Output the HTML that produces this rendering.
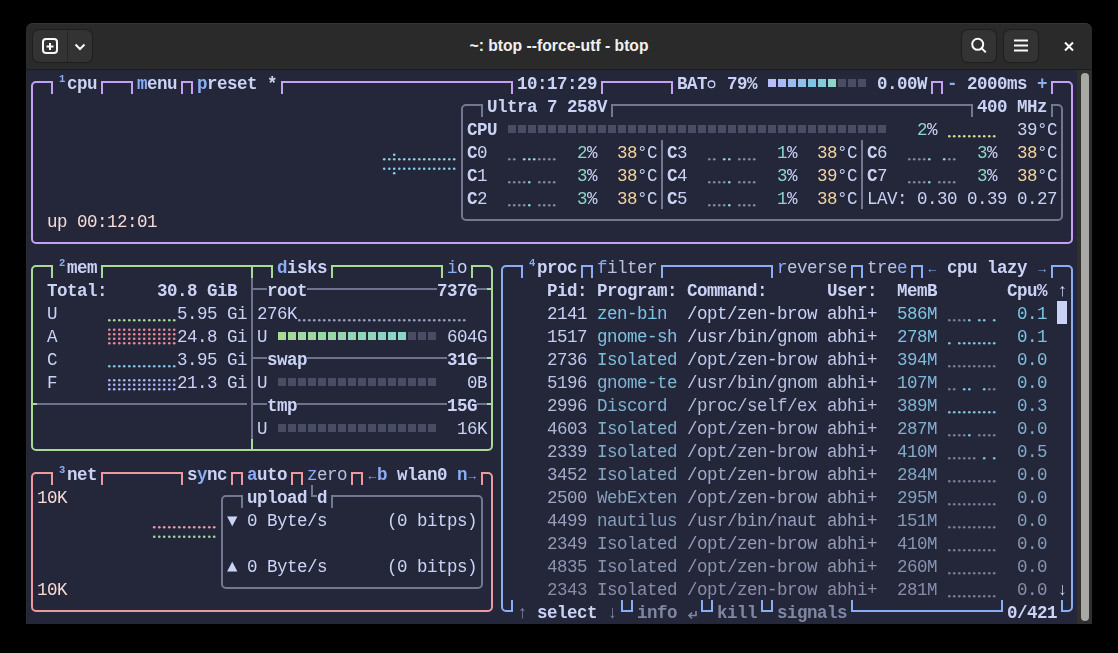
<!DOCTYPE html>
<html><head><meta charset="utf-8"><style>
html,body{margin:0;padding:0;width:1118px;height:653px;overflow:hidden;background:#000}
#win{position:absolute;left:26px;top:23px;width:1066px;height:601px;background:#2a2a2a;border-radius:7px 7px 0 0;overflow:hidden;box-shadow:inset 0 1px 0 #353535}
#hdr{position:absolute;left:0;top:0;width:1066px;height:46px;background:transparent;border-bottom:1px solid #1c1c1c}
#term{position:absolute;left:1px;top:47px;width:1050px;height:554px;background:#24273a}
#sb{position:absolute;left:1051px;top:47px;width:15px;height:554px;background:#303030}
#thumb{position:absolute;left:4px;top:3px;width:8px;height:548px;background:#a8a8a4;border-radius:4px}
.t{position:absolute;white-space:pre;font-family:"Liberation Mono",monospace;font-size:17.5px;letter-spacing:-0.5px;line-height:23px;height:23px}
.b{font-weight:bold}
.sup{font-size:10.5px;letter-spacing:0;font-weight:bold}
.arr{font-size:12.5px;letter-spacing:0}
.title{position:absolute;left:0;width:1066px;top:0;height:46px;line-height:46px;text-align:center;font-family:"Liberation Sans",sans-serif;font-weight:bold;font-size:15.7px;color:#f0f0f0}
.btn{position:absolute;background:#333333;border-radius:6px;box-shadow:0 0 0 1px rgba(0,0,0,0.28)}
svg{position:absolute;left:0;top:0}
</style></head><body>
<div id="win">
<div id="hdr">
 <div class="btn" style="left:7px;top:7px;width:59px;height:32px"></div>
 <div style="position:absolute;left:41px;top:7px;width:1px;height:32px;background:#262626"></div>
 <div class="btn" style="left:936px;top:7px;width:34px;height:32px"></div>
 <div class="btn" style="left:978px;top:7px;width:34px;height:32px"></div>
 <div class="title">~: btop --force-utf - btop</div>
 <svg width="1066" height="46" viewBox="0 0 1066 46">
  <rect x="17" y="16" width="14" height="14" rx="3" fill="none" stroke="#fafafa" stroke-width="2"/>
  <path d="M24 20V27M20.5 23.5H27.5" stroke="#fafafa" stroke-width="2"/>
  <path d="M49.5 21.5L54 26L58.5 21.5" fill="none" stroke="#fafafa" stroke-width="2"/>
  <circle cx="951.7" cy="21.3" r="5.5" fill="none" stroke="#fafafa" stroke-width="2"/>
  <path d="M955.8 25.4L959.8 29.4" stroke="#fafafa" stroke-width="2"/>
  <path d="M988 17.5H1002M988 22.5H1002M988 27.5H1002" stroke="#fafafa" stroke-width="2"/>
  <path d="M1039 19.5L1047 27.5M1047 19.5L1039 27.5" stroke="#fafafa" stroke-width="2"/>
 </svg>
</div>
<div id="term"></div>
<div id="sb"><div id="thumb"></div></div>
</div>

<svg width="1118" height="653" viewBox="0 0 1118 653" style="position:absolute;left:0;top:0">
<rect x="768" y="79" width="8" height="8" fill="#b7bdf8"/>
<rect x="778" y="79" width="8" height="8" fill="#a9bbf6"/>
<rect x="788" y="79" width="8" height="8" fill="#9bbcf2"/>
<rect x="798" y="79" width="8" height="8" fill="#8dc0ec"/>
<rect x="808" y="79" width="8" height="8" fill="#80c4e4"/>
<rect x="818" y="79" width="8" height="8" fill="#82cbd9"/>
<rect x="828" y="79" width="8" height="8" fill="#8bd5ca"/>
<rect x="838" y="79" width="8" height="8" fill="#494d64"/>
<rect x="848" y="79" width="8" height="8" fill="#494d64"/>
<rect x="858" y="79" width="8" height="8" fill="#494d64"/>
<rect x="508" y="125" width="8" height="8" fill="#494d64"/>
<rect x="518" y="125" width="8" height="8" fill="#494d64"/>
<rect x="528" y="125" width="8" height="8" fill="#494d64"/>
<rect x="538" y="125" width="8" height="8" fill="#494d64"/>
<rect x="548" y="125" width="8" height="8" fill="#494d64"/>
<rect x="558" y="125" width="8" height="8" fill="#494d64"/>
<rect x="568" y="125" width="8" height="8" fill="#494d64"/>
<rect x="578" y="125" width="8" height="8" fill="#494d64"/>
<rect x="588" y="125" width="8" height="8" fill="#494d64"/>
<rect x="598" y="125" width="8" height="8" fill="#494d64"/>
<rect x="608" y="125" width="8" height="8" fill="#494d64"/>
<rect x="618" y="125" width="8" height="8" fill="#494d64"/>
<rect x="628" y="125" width="8" height="8" fill="#494d64"/>
<rect x="638" y="125" width="8" height="8" fill="#494d64"/>
<rect x="648" y="125" width="8" height="8" fill="#494d64"/>
<rect x="658" y="125" width="8" height="8" fill="#494d64"/>
<rect x="668" y="125" width="8" height="8" fill="#494d64"/>
<rect x="678" y="125" width="8" height="8" fill="#494d64"/>
<rect x="688" y="125" width="8" height="8" fill="#494d64"/>
<rect x="698" y="125" width="8" height="8" fill="#494d64"/>
<rect x="708" y="125" width="8" height="8" fill="#494d64"/>
<rect x="718" y="125" width="8" height="8" fill="#494d64"/>
<rect x="728" y="125" width="8" height="8" fill="#494d64"/>
<rect x="738" y="125" width="8" height="8" fill="#494d64"/>
<rect x="748" y="125" width="8" height="8" fill="#494d64"/>
<rect x="758" y="125" width="8" height="8" fill="#494d64"/>
<rect x="768" y="125" width="8" height="8" fill="#494d64"/>
<rect x="778" y="125" width="8" height="8" fill="#494d64"/>
<rect x="788" y="125" width="8" height="8" fill="#494d64"/>
<rect x="798" y="125" width="8" height="8" fill="#494d64"/>
<rect x="808" y="125" width="8" height="8" fill="#494d64"/>
<rect x="818" y="125" width="8" height="8" fill="#494d64"/>
<rect x="828" y="125" width="8" height="8" fill="#494d64"/>
<rect x="838" y="125" width="8" height="8" fill="#494d64"/>
<rect x="848" y="125" width="8" height="8" fill="#494d64"/>
<rect x="858" y="125" width="8" height="8" fill="#494d64"/>
<rect x="868" y="125" width="8" height="8" fill="#494d64"/>
<rect x="878" y="125" width="8" height="8" fill="#494d64"/>
<rect x="278" y="332" width="8" height="8" fill="#a6da95"/>
<rect x="288" y="332" width="8" height="8" fill="#a3d999"/>
<rect x="298" y="332" width="8" height="8" fill="#a0d89d"/>
<rect x="308" y="332" width="8" height="8" fill="#9dd8a1"/>
<rect x="318" y="332" width="8" height="8" fill="#9ad7a6"/>
<rect x="328" y="332" width="8" height="8" fill="#97d7aa"/>
<rect x="338" y="332" width="8" height="8" fill="#94d6ae"/>
<rect x="348" y="332" width="8" height="8" fill="#91d6b2"/>
<rect x="358" y="332" width="8" height="8" fill="#8fd6b7"/>
<rect x="368" y="332" width="8" height="8" fill="#8dd5bb"/>
<rect x="378" y="332" width="8" height="8" fill="#8bd5c0"/>
<rect x="388" y="332" width="8" height="8" fill="#8bd5c5"/>
<rect x="398" y="332" width="8" height="8" fill="#8bd5ca"/>
<rect x="408" y="332" width="8" height="8" fill="#494d64"/>
<rect x="418" y="332" width="8" height="8" fill="#494d64"/>
<rect x="428" y="332" width="8" height="8" fill="#494d64"/>
<rect x="278" y="378" width="8" height="8" fill="#494d64"/>
<rect x="288" y="378" width="8" height="8" fill="#494d64"/>
<rect x="298" y="378" width="8" height="8" fill="#494d64"/>
<rect x="308" y="378" width="8" height="8" fill="#494d64"/>
<rect x="318" y="378" width="8" height="8" fill="#494d64"/>
<rect x="328" y="378" width="8" height="8" fill="#494d64"/>
<rect x="338" y="378" width="8" height="8" fill="#494d64"/>
<rect x="348" y="378" width="8" height="8" fill="#494d64"/>
<rect x="358" y="378" width="8" height="8" fill="#494d64"/>
<rect x="368" y="378" width="8" height="8" fill="#494d64"/>
<rect x="378" y="378" width="8" height="8" fill="#494d64"/>
<rect x="388" y="378" width="8" height="8" fill="#494d64"/>
<rect x="398" y="378" width="8" height="8" fill="#494d64"/>
<rect x="408" y="378" width="8" height="8" fill="#494d64"/>
<rect x="418" y="378" width="8" height="8" fill="#494d64"/>
<rect x="428" y="378" width="8" height="8" fill="#494d64"/>
<rect x="278" y="424" width="8" height="8" fill="#494d64"/>
<rect x="288" y="424" width="8" height="8" fill="#494d64"/>
<rect x="298" y="424" width="8" height="8" fill="#494d64"/>
<rect x="308" y="424" width="8" height="8" fill="#494d64"/>
<rect x="318" y="424" width="8" height="8" fill="#494d64"/>
<rect x="328" y="424" width="8" height="8" fill="#494d64"/>
<rect x="338" y="424" width="8" height="8" fill="#494d64"/>
<rect x="348" y="424" width="8" height="8" fill="#494d64"/>
<rect x="358" y="424" width="8" height="8" fill="#494d64"/>
<rect x="368" y="424" width="8" height="8" fill="#494d64"/>
<rect x="378" y="424" width="8" height="8" fill="#494d64"/>
<rect x="388" y="424" width="8" height="8" fill="#494d64"/>
<rect x="398" y="424" width="8" height="8" fill="#494d64"/>
<rect x="408" y="424" width="8" height="8" fill="#494d64"/>
<rect x="418" y="424" width="8" height="8" fill="#494d64"/>
<rect x="428" y="424" width="8" height="8" fill="#494d64"/>
<rect x="1057" y="301" width="10" height="23" fill="#cad3f5"/>
<path d="M32 94V86A4 4 0 0 1 36 82H37M37 82H47M47 82H52V94M107 82H102V94M107 82H117M117 82H127M127 82H132V94M187 82H182V94M187 82H192V94M287 82H282V94M287 82H507M507 82H512V94M607 82H602V94M607 82H667M667 82H672V94M937 82H932V94M937 82H942V94M1057 82H1052V94M1057 82H1067M1067 82H1068A4 4 0 0 1 1072 86V94M32 94V232M1072 94V232M32 232V239A4 4 0 0 0 36 243H37M37 243H1067M1067 243H1068A4 4 0 0 0 1072 239V232" fill="none" stroke="#c6a0f6" stroke-width="2"/>
<path d="M462 117V109A4 4 0 0 1 466 105H467M467 105H477M477 105H482V117M617 105H612V117M617 105H967M967 105H972V117M1057 105H1052V117M1057 105H1058A4 4 0 0 1 1062 109V117M462 117V209M1062 117V209M462 209V216A4 4 0 0 0 466 220H467M467 220H1057M1057 220H1058A4 4 0 0 0 1062 216V209M662 140V209M862 140V209M222 508V500A4 4 0 0 1 226 496H227M227 496H237M237 496H242V508M312 485V496H317M337 496H332V508M337 496H477M477 496H478A4 4 0 0 1 482 500V508M222 508V577M482 508V577M222 577V584A4 4 0 0 0 226 588H227M227 588H477M477 588H478A4 4 0 0 0 482 584V577" fill="none" stroke="#737891" stroke-width="2"/>
<path d="M32 278V270A4 4 0 0 1 36 266H37M37 266H47M47 266H52V278M107 266H102V278M107 266H247M247 266H257M252 266V278M257 266H267M267 266H272V278M337 266H332V278M337 266H437M437 266H442V278M477 266H472V278M477 266H487M487 266H488A4 4 0 0 1 492 270V278M32 278V439M492 278V439M32 439V446A4 4 0 0 0 36 450H37M37 450H247M247 450H257M252 450V439M257 450H487M487 450H488A4 4 0 0 0 492 446V439M32 404H37M487 289H492M487 358H492M487 404H492" fill="none" stroke="#a6da95" stroke-width="2"/>
<path d="M252 278V439M37 404H247M252 278V301M252 289H257M257 289H267M307 289H437M477 289H487M252 347V370M252 358H257M257 358H267M307 358H447M477 358H487M252 393V416M252 404H257M257 404H267M297 404H447M477 404H487" fill="none" stroke="#6e738d" stroke-width="2"/>
<path d="M32 485V477A4 4 0 0 1 36 473H37M37 473H47M47 473H52V485M107 473H102V485M107 473H177M177 473H182V485M237 473H232V485M237 473H242V485M297 473H292V485M297 473H302V485M357 473H352V485M357 473H362V485M487 473H482V485M487 473H488A4 4 0 0 1 492 477V485M32 485V600M492 485V600M32 600V607A4 4 0 0 0 36 611H37M37 611H487M487 611H488A4 4 0 0 0 492 607V600" fill="none" stroke="#ee99a0" stroke-width="2"/>
<path d="M502 278V270A4 4 0 0 1 506 266H507M507 266H517M517 266H522V278M587 266H582V278M587 266H592V278M667 266H662V278M667 266H767M767 266H772V278M857 266H852V278M857 266H862V278M917 266H912V278M917 266H922V278M1057 266H1052V278M1057 266H1067M1067 266H1068A4 4 0 0 1 1072 270V278M502 278V600M1072 278V600M502 600V607A4 4 0 0 0 506 611H507M507 611H512V600M622 600V611H627M627 611H632V600M702 600V611H707M707 611H712V600M762 600V611H767M767 611H772V600M852 600V611H857M857 611H997M997 611H1002V600M1062 600V611H1067M1067 611H1068A4 4 0 0 0 1072 607V600" fill="none" stroke="#8aadf4" stroke-width="2"/>
<g fill="#86cde6"><circle cx="384.2" cy="159.3" r="1.3"/><circle cx="384.2" cy="168.7" r="1.3"/><circle cx="389.3" cy="159.3" r="1.3"/><circle cx="389.3" cy="168.7" r="1.3"/><circle cx="394.2" cy="159.3" r="1.3"/><circle cx="394.2" cy="168.7" r="1.3"/><circle cx="399.3" cy="159.3" r="1.3"/><circle cx="399.3" cy="168.7" r="1.3"/><circle cx="404.2" cy="159.3" r="1.3"/><circle cx="404.2" cy="168.7" r="1.3"/><circle cx="409.3" cy="159.3" r="1.3"/><circle cx="409.3" cy="168.7" r="1.3"/><circle cx="414.2" cy="159.3" r="1.3"/><circle cx="414.2" cy="168.7" r="1.3"/><circle cx="419.3" cy="159.3" r="1.3"/><circle cx="419.3" cy="168.7" r="1.3"/><circle cx="424.2" cy="159.3" r="1.3"/><circle cx="424.2" cy="168.7" r="1.3"/><circle cx="429.3" cy="159.3" r="1.3"/><circle cx="429.3" cy="168.7" r="1.3"/><circle cx="434.2" cy="159.3" r="1.3"/><circle cx="434.2" cy="168.7" r="1.3"/><circle cx="439.3" cy="159.3" r="1.3"/><circle cx="439.3" cy="168.7" r="1.3"/><circle cx="444.2" cy="159.3" r="1.3"/><circle cx="444.2" cy="168.7" r="1.3"/><circle cx="449.3" cy="159.3" r="1.3"/><circle cx="449.3" cy="168.7" r="1.3"/><circle cx="454.2" cy="159.3" r="1.3"/><circle cx="454.2" cy="168.7" r="1.3"/><circle cx="394.2" cy="154.8" r="1.3"/><circle cx="394.2" cy="173.2" r="1.3"/></g>
<g fill="#d5dc90"><circle cx="949.3" cy="136.3" r="1.3"/><circle cx="954.2" cy="136.3" r="1.3"/><circle cx="959.3" cy="136.3" r="1.3"/><circle cx="964.2" cy="136.3" r="1.3"/><circle cx="969.3" cy="136.3" r="1.3"/><circle cx="974.2" cy="136.3" r="1.3"/><circle cx="979.3" cy="136.3" r="1.3"/><circle cx="984.2" cy="136.3" r="1.3"/><circle cx="989.3" cy="136.3" r="1.3"/><circle cx="994.2" cy="136.3" r="1.3"/></g>
<g fill="#8087a2"><circle cx="509.3" cy="159.3" r="1.3"/><circle cx="514.2" cy="159.3" r="1.3"/><circle cx="539.3" cy="159.3" r="1.3"/><circle cx="544.2" cy="159.3" r="1.3"/><circle cx="549.3" cy="159.3" r="1.3"/><circle cx="554.2" cy="159.3" r="1.3"/><circle cx="509.3" cy="182.3" r="1.3"/><circle cx="514.2" cy="182.3" r="1.3"/><circle cx="519.3" cy="182.3" r="1.3"/><circle cx="524.2" cy="182.3" r="1.3"/><circle cx="539.3" cy="182.3" r="1.3"/><circle cx="544.2" cy="182.3" r="1.3"/><circle cx="549.3" cy="182.3" r="1.3"/><circle cx="554.2" cy="182.3" r="1.3"/><circle cx="509.3" cy="205.3" r="1.3"/><circle cx="514.2" cy="205.3" r="1.3"/><circle cx="519.3" cy="205.3" r="1.3"/><circle cx="524.2" cy="205.3" r="1.3"/><circle cx="539.3" cy="205.3" r="1.3"/><circle cx="544.2" cy="205.3" r="1.3"/><circle cx="549.3" cy="205.3" r="1.3"/><circle cx="554.2" cy="205.3" r="1.3"/><circle cx="709.3" cy="159.3" r="1.3"/><circle cx="714.2" cy="159.3" r="1.3"/><circle cx="739.3" cy="159.3" r="1.3"/><circle cx="744.2" cy="159.3" r="1.3"/><circle cx="749.3" cy="159.3" r="1.3"/><circle cx="754.2" cy="159.3" r="1.3"/><circle cx="709.3" cy="182.3" r="1.3"/><circle cx="714.2" cy="182.3" r="1.3"/><circle cx="719.3" cy="182.3" r="1.3"/><circle cx="724.2" cy="182.3" r="1.3"/><circle cx="739.3" cy="182.3" r="1.3"/><circle cx="744.2" cy="182.3" r="1.3"/><circle cx="749.3" cy="182.3" r="1.3"/><circle cx="754.2" cy="182.3" r="1.3"/><circle cx="709.3" cy="205.3" r="1.3"/><circle cx="714.2" cy="205.3" r="1.3"/><circle cx="719.3" cy="205.3" r="1.3"/><circle cx="724.2" cy="205.3" r="1.3"/><circle cx="739.3" cy="205.3" r="1.3"/><circle cx="744.2" cy="205.3" r="1.3"/><circle cx="749.3" cy="205.3" r="1.3"/><circle cx="754.2" cy="205.3" r="1.3"/><circle cx="909.3" cy="159.3" r="1.3"/><circle cx="914.2" cy="159.3" r="1.3"/><circle cx="919.3" cy="159.3" r="1.3"/><circle cx="924.2" cy="159.3" r="1.3"/><circle cx="949.3" cy="159.3" r="1.3"/><circle cx="954.2" cy="159.3" r="1.3"/><circle cx="909.3" cy="182.3" r="1.3"/><circle cx="914.2" cy="182.3" r="1.3"/><circle cx="919.3" cy="182.3" r="1.3"/><circle cx="924.2" cy="182.3" r="1.3"/><circle cx="939.3" cy="182.3" r="1.3"/><circle cx="944.2" cy="182.3" r="1.3"/><circle cx="949.3" cy="182.3" r="1.3"/><circle cx="954.2" cy="182.3" r="1.3"/></g>
<g fill="#8bd5ca"><circle cx="524.2" cy="159.3" r="1.3"/><circle cx="529.3" cy="159.3" r="1.3"/><circle cx="534.2" cy="159.3" r="1.3"/><circle cx="529.3" cy="182.3" r="1.3"/><circle cx="529.3" cy="205.3" r="1.3"/><circle cx="724.2" cy="159.3" r="1.3"/><circle cx="729.3" cy="159.3" r="1.3"/><circle cx="729.3" cy="182.3" r="1.3"/><circle cx="729.3" cy="205.3" r="1.3"/><circle cx="929.3" cy="159.3" r="1.3"/><circle cx="944.2" cy="159.3" r="1.3"/><circle cx="929.3" cy="182.3" r="1.3"/></g>
<g fill="#a6da95"><circle cx="109.3" cy="320.3" r="1.3"/><circle cx="114.2" cy="320.3" r="1.3"/><circle cx="119.3" cy="320.3" r="1.3"/><circle cx="124.2" cy="320.3" r="1.3"/><circle cx="129.3" cy="320.3" r="1.3"/><circle cx="134.2" cy="320.3" r="1.3"/><circle cx="139.3" cy="320.3" r="1.3"/><circle cx="144.2" cy="320.3" r="1.3"/><circle cx="149.3" cy="320.3" r="1.3"/><circle cx="154.2" cy="320.3" r="1.3"/><circle cx="159.3" cy="320.3" r="1.3"/><circle cx="164.2" cy="320.3" r="1.3"/><circle cx="169.3" cy="320.3" r="1.3"/><circle cx="174.2" cy="320.3" r="1.3"/></g>
<g fill="#ed8796"><circle cx="109.3" cy="329.7" r="1.3"/><circle cx="114.2" cy="329.7" r="1.3"/><circle cx="119.3" cy="329.7" r="1.3"/><circle cx="124.2" cy="329.7" r="1.3"/><circle cx="129.3" cy="329.7" r="1.3"/><circle cx="134.2" cy="329.7" r="1.3"/><circle cx="139.3" cy="329.7" r="1.3"/><circle cx="144.2" cy="329.7" r="1.3"/><circle cx="149.3" cy="329.7" r="1.3"/><circle cx="154.2" cy="329.7" r="1.3"/><circle cx="159.3" cy="329.7" r="1.3"/><circle cx="164.2" cy="329.7" r="1.3"/><circle cx="169.3" cy="329.7" r="1.3"/><circle cx="174.2" cy="329.7" r="1.3"/><circle cx="109.3" cy="334.2" r="1.3"/><circle cx="114.2" cy="334.2" r="1.3"/><circle cx="119.3" cy="334.2" r="1.3"/><circle cx="124.2" cy="334.2" r="1.3"/><circle cx="129.3" cy="334.2" r="1.3"/><circle cx="134.2" cy="334.2" r="1.3"/><circle cx="139.3" cy="334.2" r="1.3"/><circle cx="144.2" cy="334.2" r="1.3"/><circle cx="149.3" cy="334.2" r="1.3"/><circle cx="154.2" cy="334.2" r="1.3"/><circle cx="159.3" cy="334.2" r="1.3"/><circle cx="164.2" cy="334.2" r="1.3"/><circle cx="169.3" cy="334.2" r="1.3"/><circle cx="174.2" cy="334.2" r="1.3"/><circle cx="109.3" cy="338.8" r="1.3"/><circle cx="114.2" cy="338.8" r="1.3"/><circle cx="119.3" cy="338.8" r="1.3"/><circle cx="124.2" cy="338.8" r="1.3"/><circle cx="129.3" cy="338.8" r="1.3"/><circle cx="134.2" cy="338.8" r="1.3"/><circle cx="139.3" cy="338.8" r="1.3"/><circle cx="144.2" cy="338.8" r="1.3"/><circle cx="149.3" cy="338.8" r="1.3"/><circle cx="154.2" cy="338.8" r="1.3"/><circle cx="159.3" cy="338.8" r="1.3"/><circle cx="164.2" cy="338.8" r="1.3"/><circle cx="169.3" cy="338.8" r="1.3"/><circle cx="174.2" cy="338.8" r="1.3"/><circle cx="109.3" cy="343.3" r="1.3"/><circle cx="114.2" cy="343.3" r="1.3"/><circle cx="119.3" cy="343.3" r="1.3"/><circle cx="124.2" cy="343.3" r="1.3"/><circle cx="129.3" cy="343.3" r="1.3"/><circle cx="134.2" cy="343.3" r="1.3"/><circle cx="139.3" cy="343.3" r="1.3"/><circle cx="144.2" cy="343.3" r="1.3"/><circle cx="149.3" cy="343.3" r="1.3"/><circle cx="154.2" cy="343.3" r="1.3"/><circle cx="159.3" cy="343.3" r="1.3"/><circle cx="164.2" cy="343.3" r="1.3"/><circle cx="169.3" cy="343.3" r="1.3"/><circle cx="174.2" cy="343.3" r="1.3"/></g>
<g fill="#7dc4e4"><circle cx="109.3" cy="366.3" r="1.3"/><circle cx="114.2" cy="366.3" r="1.3"/><circle cx="119.3" cy="366.3" r="1.3"/><circle cx="124.2" cy="366.3" r="1.3"/><circle cx="129.3" cy="366.3" r="1.3"/><circle cx="134.2" cy="366.3" r="1.3"/><circle cx="139.3" cy="366.3" r="1.3"/><circle cx="144.2" cy="366.3" r="1.3"/><circle cx="149.3" cy="366.3" r="1.3"/><circle cx="154.2" cy="366.3" r="1.3"/><circle cx="159.3" cy="366.3" r="1.3"/><circle cx="164.2" cy="366.3" r="1.3"/><circle cx="169.3" cy="366.3" r="1.3"/><circle cx="174.2" cy="366.3" r="1.3"/><circle cx="969.3" cy="320.3" r="1.3"/><circle cx="979.3" cy="320.3" r="1.3"/><circle cx="984.2" cy="320.3" r="1.3"/><circle cx="994.2" cy="320.3" r="1.3"/><circle cx="949.3" cy="343.3" r="1.3"/><circle cx="959.3" cy="343.3" r="1.3"/><circle cx="964.2" cy="343.3" r="1.3"/><circle cx="969.3" cy="343.3" r="1.3"/><circle cx="974.2" cy="343.3" r="1.3"/><circle cx="979.3" cy="343.3" r="1.3"/><circle cx="984.2" cy="343.3" r="1.3"/><circle cx="989.3" cy="343.3" r="1.3"/><circle cx="994.2" cy="343.3" r="1.3"/><circle cx="964.2" cy="389.3" r="1.3"/><circle cx="969.3" cy="389.3" r="1.3"/><circle cx="984.2" cy="389.3" r="1.3"/><circle cx="949.3" cy="412.3" r="1.3"/><circle cx="954.2" cy="412.3" r="1.3"/><circle cx="959.3" cy="412.3" r="1.3"/><circle cx="964.2" cy="412.3" r="1.3"/><circle cx="969.3" cy="412.3" r="1.3"/><circle cx="974.2" cy="412.3" r="1.3"/><circle cx="979.3" cy="412.3" r="1.3"/><circle cx="984.2" cy="412.3" r="1.3"/><circle cx="989.3" cy="412.3" r="1.3"/><circle cx="994.2" cy="412.3" r="1.3"/><circle cx="969.3" cy="435.3" r="1.3"/><circle cx="984.2" cy="458.3" r="1.3"/><circle cx="994.2" cy="458.3" r="1.3"/></g>
<g fill="#a8b6f6"><circle cx="109.3" cy="380.2" r="1.3"/><circle cx="114.2" cy="380.2" r="1.3"/><circle cx="119.3" cy="380.2" r="1.3"/><circle cx="124.2" cy="380.2" r="1.3"/><circle cx="129.3" cy="380.2" r="1.3"/><circle cx="134.2" cy="380.2" r="1.3"/><circle cx="139.3" cy="380.2" r="1.3"/><circle cx="144.2" cy="380.2" r="1.3"/><circle cx="149.3" cy="380.2" r="1.3"/><circle cx="154.2" cy="380.2" r="1.3"/><circle cx="159.3" cy="380.2" r="1.3"/><circle cx="164.2" cy="380.2" r="1.3"/><circle cx="169.3" cy="380.2" r="1.3"/><circle cx="174.2" cy="380.2" r="1.3"/><circle cx="109.3" cy="384.8" r="1.3"/><circle cx="114.2" cy="384.8" r="1.3"/><circle cx="119.3" cy="384.8" r="1.3"/><circle cx="124.2" cy="384.8" r="1.3"/><circle cx="129.3" cy="384.8" r="1.3"/><circle cx="134.2" cy="384.8" r="1.3"/><circle cx="139.3" cy="384.8" r="1.3"/><circle cx="144.2" cy="384.8" r="1.3"/><circle cx="149.3" cy="384.8" r="1.3"/><circle cx="154.2" cy="384.8" r="1.3"/><circle cx="159.3" cy="384.8" r="1.3"/><circle cx="164.2" cy="384.8" r="1.3"/><circle cx="169.3" cy="384.8" r="1.3"/><circle cx="174.2" cy="384.8" r="1.3"/><circle cx="109.3" cy="389.3" r="1.3"/><circle cx="114.2" cy="389.3" r="1.3"/><circle cx="119.3" cy="389.3" r="1.3"/><circle cx="124.2" cy="389.3" r="1.3"/><circle cx="129.3" cy="389.3" r="1.3"/><circle cx="134.2" cy="389.3" r="1.3"/><circle cx="139.3" cy="389.3" r="1.3"/><circle cx="144.2" cy="389.3" r="1.3"/><circle cx="149.3" cy="389.3" r="1.3"/><circle cx="154.2" cy="389.3" r="1.3"/><circle cx="159.3" cy="389.3" r="1.3"/><circle cx="164.2" cy="389.3" r="1.3"/><circle cx="169.3" cy="389.3" r="1.3"/><circle cx="174.2" cy="389.3" r="1.3"/></g>
<g fill="#9aa1c0"><circle cx="299.3" cy="320.3" r="1.3"/><circle cx="304.2" cy="320.3" r="1.3"/><circle cx="309.3" cy="320.3" r="1.3"/><circle cx="314.2" cy="320.3" r="1.3"/><circle cx="319.3" cy="320.3" r="1.3"/><circle cx="324.2" cy="320.3" r="1.3"/><circle cx="329.3" cy="320.3" r="1.3"/><circle cx="334.2" cy="320.3" r="1.3"/><circle cx="339.3" cy="320.3" r="1.3"/><circle cx="344.2" cy="320.3" r="1.3"/><circle cx="349.3" cy="320.3" r="1.3"/><circle cx="354.2" cy="320.3" r="1.3"/><circle cx="359.3" cy="320.3" r="1.3"/><circle cx="364.2" cy="320.3" r="1.3"/><circle cx="369.3" cy="320.3" r="1.3"/><circle cx="374.2" cy="320.3" r="1.3"/><circle cx="379.3" cy="320.3" r="1.3"/><circle cx="384.2" cy="320.3" r="1.3"/><circle cx="389.3" cy="320.3" r="1.3"/><circle cx="394.2" cy="320.3" r="1.3"/><circle cx="399.3" cy="320.3" r="1.3"/><circle cx="404.2" cy="320.3" r="1.3"/><circle cx="409.3" cy="320.3" r="1.3"/><circle cx="414.2" cy="320.3" r="1.3"/><circle cx="419.3" cy="320.3" r="1.3"/><circle cx="424.2" cy="320.3" r="1.3"/><circle cx="429.3" cy="320.3" r="1.3"/><circle cx="434.2" cy="320.3" r="1.3"/><circle cx="439.3" cy="320.3" r="1.3"/><circle cx="444.2" cy="320.3" r="1.3"/><circle cx="449.3" cy="320.3" r="1.3"/><circle cx="454.2" cy="320.3" r="1.3"/><circle cx="459.3" cy="320.3" r="1.3"/><circle cx="464.2" cy="320.3" r="1.3"/></g>
<g fill="#ee99a0"><circle cx="154.2" cy="527.3" r="1.3"/><circle cx="159.3" cy="527.3" r="1.3"/><circle cx="164.2" cy="527.3" r="1.3"/><circle cx="169.3" cy="527.3" r="1.3"/><circle cx="174.2" cy="527.3" r="1.3"/><circle cx="179.3" cy="527.3" r="1.3"/><circle cx="184.2" cy="527.3" r="1.3"/><circle cx="189.3" cy="527.3" r="1.3"/><circle cx="194.2" cy="527.3" r="1.3"/><circle cx="199.3" cy="527.3" r="1.3"/><circle cx="204.2" cy="527.3" r="1.3"/><circle cx="209.3" cy="527.3" r="1.3"/><circle cx="214.2" cy="527.3" r="1.3"/></g>
<g fill="#9dd9b0"><circle cx="154.2" cy="536.7" r="1.3"/><circle cx="159.3" cy="536.7" r="1.3"/><circle cx="164.2" cy="536.7" r="1.3"/><circle cx="169.3" cy="536.7" r="1.3"/><circle cx="174.2" cy="536.7" r="1.3"/><circle cx="179.3" cy="536.7" r="1.3"/><circle cx="184.2" cy="536.7" r="1.3"/><circle cx="189.3" cy="536.7" r="1.3"/><circle cx="194.2" cy="536.7" r="1.3"/><circle cx="199.3" cy="536.7" r="1.3"/><circle cx="204.2" cy="536.7" r="1.3"/><circle cx="209.3" cy="536.7" r="1.3"/><circle cx="214.2" cy="536.7" r="1.3"/></g>
<g fill="#787d98"><circle cx="949.3" cy="320.3" r="1.3"/><circle cx="954.2" cy="320.3" r="1.3"/><circle cx="959.3" cy="320.3" r="1.3"/><circle cx="964.2" cy="320.3" r="1.3"/><circle cx="949.3" cy="366.3" r="1.3"/><circle cx="954.2" cy="366.3" r="1.3"/><circle cx="959.3" cy="366.3" r="1.3"/><circle cx="964.2" cy="366.3" r="1.3"/><circle cx="969.3" cy="366.3" r="1.3"/><circle cx="974.2" cy="366.3" r="1.3"/><circle cx="979.3" cy="366.3" r="1.3"/><circle cx="984.2" cy="366.3" r="1.3"/><circle cx="989.3" cy="366.3" r="1.3"/><circle cx="994.2" cy="366.3" r="1.3"/><circle cx="949.3" cy="389.3" r="1.3"/><circle cx="954.2" cy="389.3" r="1.3"/><circle cx="989.3" cy="389.3" r="1.3"/><circle cx="994.2" cy="389.3" r="1.3"/><circle cx="949.3" cy="435.3" r="1.3"/><circle cx="954.2" cy="435.3" r="1.3"/><circle cx="959.3" cy="435.3" r="1.3"/><circle cx="964.2" cy="435.3" r="1.3"/><circle cx="979.3" cy="435.3" r="1.3"/><circle cx="984.2" cy="435.3" r="1.3"/><circle cx="989.3" cy="435.3" r="1.3"/><circle cx="994.2" cy="435.3" r="1.3"/><circle cx="949.3" cy="458.3" r="1.3"/><circle cx="954.2" cy="458.3" r="1.3"/><circle cx="959.3" cy="458.3" r="1.3"/><circle cx="964.2" cy="458.3" r="1.3"/><circle cx="969.3" cy="458.3" r="1.3"/><circle cx="974.2" cy="458.3" r="1.3"/><circle cx="949.3" cy="481.3" r="1.3"/><circle cx="954.2" cy="481.3" r="1.3"/><circle cx="959.3" cy="481.3" r="1.3"/><circle cx="964.2" cy="481.3" r="1.3"/><circle cx="969.3" cy="481.3" r="1.3"/><circle cx="974.2" cy="481.3" r="1.3"/><circle cx="979.3" cy="481.3" r="1.3"/><circle cx="984.2" cy="481.3" r="1.3"/><circle cx="989.3" cy="481.3" r="1.3"/><circle cx="994.2" cy="481.3" r="1.3"/><circle cx="949.3" cy="504.3" r="1.3"/><circle cx="954.2" cy="504.3" r="1.3"/><circle cx="959.3" cy="504.3" r="1.3"/><circle cx="964.2" cy="504.3" r="1.3"/><circle cx="969.3" cy="504.3" r="1.3"/><circle cx="974.2" cy="504.3" r="1.3"/><circle cx="979.3" cy="504.3" r="1.3"/><circle cx="984.2" cy="504.3" r="1.3"/><circle cx="989.3" cy="504.3" r="1.3"/><circle cx="994.2" cy="504.3" r="1.3"/><circle cx="949.3" cy="527.3" r="1.3"/><circle cx="954.2" cy="527.3" r="1.3"/><circle cx="959.3" cy="527.3" r="1.3"/><circle cx="964.2" cy="527.3" r="1.3"/><circle cx="969.3" cy="527.3" r="1.3"/><circle cx="974.2" cy="527.3" r="1.3"/><circle cx="979.3" cy="527.3" r="1.3"/><circle cx="984.2" cy="527.3" r="1.3"/><circle cx="989.3" cy="527.3" r="1.3"/><circle cx="994.2" cy="527.3" r="1.3"/><circle cx="949.3" cy="550.3" r="1.3"/><circle cx="954.2" cy="550.3" r="1.3"/><circle cx="959.3" cy="550.3" r="1.3"/><circle cx="964.2" cy="550.3" r="1.3"/><circle cx="969.3" cy="550.3" r="1.3"/><circle cx="974.2" cy="550.3" r="1.3"/><circle cx="979.3" cy="550.3" r="1.3"/><circle cx="984.2" cy="550.3" r="1.3"/><circle cx="989.3" cy="550.3" r="1.3"/><circle cx="994.2" cy="550.3" r="1.3"/><circle cx="949.3" cy="573.3" r="1.3"/><circle cx="954.2" cy="573.3" r="1.3"/><circle cx="959.3" cy="573.3" r="1.3"/><circle cx="964.2" cy="573.3" r="1.3"/><circle cx="969.3" cy="573.3" r="1.3"/><circle cx="974.2" cy="573.3" r="1.3"/><circle cx="979.3" cy="573.3" r="1.3"/><circle cx="984.2" cy="573.3" r="1.3"/><circle cx="989.3" cy="573.3" r="1.3"/><circle cx="994.2" cy="573.3" r="1.3"/><circle cx="949.3" cy="596.3" r="1.3"/><circle cx="954.2" cy="596.3" r="1.3"/><circle cx="959.3" cy="596.3" r="1.3"/><circle cx="964.2" cy="596.3" r="1.3"/><circle cx="969.3" cy="596.3" r="1.3"/><circle cx="974.2" cy="596.3" r="1.3"/><circle cx="979.3" cy="596.3" r="1.3"/><circle cx="984.2" cy="596.3" r="1.3"/><circle cx="989.3" cy="596.3" r="1.3"/><circle cx="994.2" cy="596.3" r="1.3"/></g>
<path d="M696 611V615.5H689.5M692 612.5L689 615.5L692 618.5" fill="none" stroke="#8087a2" stroke-width="1.6"/>
<circle cx="711.5" cy="84.3" r="3.3" fill="none" stroke="#cad3f5" stroke-width="1.3"/>
</svg>
<div id="txt" style="position:absolute;left:0;top:0;width:1118px;height:653px;will-change:transform">
<div class="t sup" style="left:59px;top:68px;color:#8aadf4">1</div>
<div class="t b" style="left:67px;top:73px;color:#cad3f5">cpu</div>
<div class="t b" style="left:137px;top:73px;color:#8aadf4">m</div>
<div class="t b" style="left:147px;top:73px;color:#cad3f5">enu</div>
<div class="t b" style="left:197px;top:73px;color:#8aadf4">p</div>
<div class="t b" style="left:207px;top:73px;color:#cad3f5">reset *</div>
<div class="t b" style="left:517px;top:73px;color:#cad3f5">10:17:29</div>
<div class="t b" style="left:677px;top:73px;color:#cad3f5">BAT</div>
<div class="t b" style="left:727px;top:73px;color:#cad3f5">79%</div>
<div class="t b" style="left:877px;top:73px;color:#cad3f5">0.00W</div>
<div class="t b" style="left:947px;top:73px;color:#8aadf4">-</div>
<div class="t b" style="left:967px;top:73px;color:#cad3f5">2000ms</div>
<div class="t b" style="left:1037px;top:73px;color:#8aadf4">+</div>
<div class="t" style="left:47px;top:211px;color:#f4dbd6">up 00:12:01</div>
<div class="t b" style="left:487px;top:96px;color:#cad3f5">Ultra 7 258V</div>
<div class="t b" style="left:977px;top:96px;color:#cad3f5">400 MHz</div>
<div class="t b" style="left:467px;top:119px;color:#cad3f5">CPU</div>
<div class="t" style="left:917px;top:119px;color:#8bd5ca">2</div>
<div class="t" style="left:927px;top:119px;color:#cad3f5">%</div>
<div class="t" style="left:1017px;top:119px;color:#cad3f5">39°C</div>
<div class="t b" style="left:467px;top:142px;color:#cad3f5">C</div>
<div class="t" style="left:477px;top:142px;color:#cad3f5">0</div>
<div class="t" style="left:577px;top:142px;color:#8bd5ca">2</div>
<div class="t" style="left:587px;top:142px;color:#cad3f5">%</div>
<div class="t" style="left:617px;top:142px;color:#eed49f">38</div>
<div class="t" style="left:637px;top:142px;color:#cad3f5">°C</div>
<div class="t b" style="left:467px;top:165px;color:#cad3f5">C</div>
<div class="t" style="left:477px;top:165px;color:#cad3f5">1</div>
<div class="t" style="left:577px;top:165px;color:#8bd5ca">3</div>
<div class="t" style="left:587px;top:165px;color:#cad3f5">%</div>
<div class="t" style="left:617px;top:165px;color:#eed49f">38</div>
<div class="t" style="left:637px;top:165px;color:#cad3f5">°C</div>
<div class="t b" style="left:467px;top:188px;color:#cad3f5">C</div>
<div class="t" style="left:477px;top:188px;color:#cad3f5">2</div>
<div class="t" style="left:577px;top:188px;color:#8bd5ca">3</div>
<div class="t" style="left:587px;top:188px;color:#cad3f5">%</div>
<div class="t" style="left:617px;top:188px;color:#eed49f">38</div>
<div class="t" style="left:637px;top:188px;color:#cad3f5">°C</div>
<div class="t b" style="left:667px;top:142px;color:#cad3f5">C</div>
<div class="t" style="left:677px;top:142px;color:#cad3f5">3</div>
<div class="t" style="left:777px;top:142px;color:#8bd5ca">1</div>
<div class="t" style="left:787px;top:142px;color:#cad3f5">%</div>
<div class="t" style="left:817px;top:142px;color:#eed49f">38</div>
<div class="t" style="left:837px;top:142px;color:#cad3f5">°C</div>
<div class="t b" style="left:667px;top:165px;color:#cad3f5">C</div>
<div class="t" style="left:677px;top:165px;color:#cad3f5">4</div>
<div class="t" style="left:777px;top:165px;color:#8bd5ca">3</div>
<div class="t" style="left:787px;top:165px;color:#cad3f5">%</div>
<div class="t" style="left:817px;top:165px;color:#eed49f">39</div>
<div class="t" style="left:837px;top:165px;color:#cad3f5">°C</div>
<div class="t b" style="left:667px;top:188px;color:#cad3f5">C</div>
<div class="t" style="left:677px;top:188px;color:#cad3f5">5</div>
<div class="t" style="left:777px;top:188px;color:#8bd5ca">1</div>
<div class="t" style="left:787px;top:188px;color:#cad3f5">%</div>
<div class="t" style="left:817px;top:188px;color:#eed49f">38</div>
<div class="t" style="left:837px;top:188px;color:#cad3f5">°C</div>
<div class="t b" style="left:867px;top:142px;color:#cad3f5">C</div>
<div class="t" style="left:877px;top:142px;color:#cad3f5">6</div>
<div class="t" style="left:977px;top:142px;color:#8bd5ca">3</div>
<div class="t" style="left:987px;top:142px;color:#cad3f5">%</div>
<div class="t" style="left:1017px;top:142px;color:#eed49f">38</div>
<div class="t" style="left:1037px;top:142px;color:#cad3f5">°C</div>
<div class="t b" style="left:867px;top:165px;color:#cad3f5">C</div>
<div class="t" style="left:877px;top:165px;color:#cad3f5">7</div>
<div class="t" style="left:977px;top:165px;color:#8bd5ca">3</div>
<div class="t" style="left:987px;top:165px;color:#cad3f5">%</div>
<div class="t" style="left:1017px;top:165px;color:#eed49f">38</div>
<div class="t" style="left:1037px;top:165px;color:#cad3f5">°C</div>
<div class="t" style="left:867px;top:188px;color:#cad3f5">LAV: 0.30 0.39 0.27</div>
<div class="t sup" style="left:59px;top:252px;color:#8aadf4">2</div>
<div class="t b" style="left:67px;top:257px;color:#cad3f5">mem</div>
<div class="t b" style="left:277px;top:257px;color:#8aadf4">d</div>
<div class="t b" style="left:287px;top:257px;color:#cad3f5">isks</div>
<div class="t" style="left:447px;top:257px;color:#8aadf4">i</div>
<div class="t" style="left:457px;top:257px;color:#cad3f5">o</div>
<div class="t b" style="left:47px;top:280px;color:#cad3f5">Total:</div>
<div class="t b" style="left:157px;top:280px;color:#cad3f5">30.8 GiB</div>
<div class="t" style="left:47px;top:303px;color:#cad3f5">U</div>
<div class="t" style="left:177px;top:303px;color:#cad3f5">5.95 Gi</div>
<div class="t" style="left:47px;top:326px;color:#cad3f5">A</div>
<div class="t" style="left:177px;top:326px;color:#cad3f5">24.8 Gi</div>
<div class="t" style="left:47px;top:349px;color:#cad3f5">C</div>
<div class="t" style="left:177px;top:349px;color:#cad3f5">3.95 Gi</div>
<div class="t" style="left:47px;top:372px;color:#cad3f5">F</div>
<div class="t" style="left:177px;top:372px;color:#cad3f5">21.3 Gi</div>
<div class="t b" style="left:267px;top:280px;color:#cad3f5">root</div>
<div class="t b" style="left:437px;top:280px;color:#cad3f5">737G</div>
<div class="t b" style="left:267px;top:349px;color:#cad3f5">swap</div>
<div class="t b" style="left:447px;top:349px;color:#cad3f5">31G</div>
<div class="t b" style="left:267px;top:395px;color:#cad3f5">tmp</div>
<div class="t b" style="left:447px;top:395px;color:#cad3f5">15G</div>
<div class="t" style="left:257px;top:303px;color:#cad3f5">276K</div>
<div class="t" style="left:257px;top:326px;color:#cad3f5">U</div>
<div class="t" style="left:447px;top:326px;color:#cad3f5">604G</div>
<div class="t" style="left:257px;top:372px;color:#cad3f5">U</div>
<div class="t" style="left:467px;top:372px;color:#cad3f5">0B</div>
<div class="t" style="left:257px;top:418px;color:#cad3f5">U</div>
<div class="t" style="left:457px;top:418px;color:#cad3f5">16K</div>
<div class="t sup" style="left:59px;top:459px;color:#8aadf4">3</div>
<div class="t b" style="left:67px;top:464px;color:#cad3f5">net</div>
<div class="t b" style="left:187px;top:464px;color:#cad3f5">s</div>
<div class="t b" style="left:197px;top:464px;color:#8aadf4">y</div>
<div class="t b" style="left:207px;top:464px;color:#cad3f5">nc</div>
<div class="t b" style="left:247px;top:464px;color:#8aadf4">a</div>
<div class="t b" style="left:257px;top:464px;color:#cad3f5">uto</div>
<div class="t" style="left:307px;top:464px;color:#8aadf4">z</div>
<div class="t" style="left:317px;top:464px;color:#b8c0e0">ero</div>
<div class="t arr" style="left:368.5px;top:466px;color:#8aadf4">←</div>
<div class="t b" style="left:377px;top:464px;color:#8aadf4">b</div>
<div class="t b" style="left:397px;top:464px;color:#cad3f5">wlan0</div>
<div class="t b" style="left:457px;top:464px;color:#8aadf4">n</div>
<div class="t arr" style="left:468.5px;top:466px;color:#8aadf4">→</div>
<div class="t" style="left:37px;top:487px;color:#f4dbd6">10K</div>
<div class="t" style="left:37px;top:579px;color:#f4dbd6">10K</div>
<div class="t b" style="left:247px;top:487px;color:#cad3f5">upload</div>
<div class="t b" style="left:317px;top:487px;color:#cad3f5">d</div>
<div class="t tri" style="left:227px;top:510px;color:#cad3f5">▼</div>
<div class="t" style="left:247px;top:510px;color:#cad3f5">0 Byte/s</div>
<div class="t" style="left:387px;top:510px;color:#cad3f5">(0 bitps)</div>
<div class="t tri" style="left:227px;top:556px;color:#cad3f5">▲</div>
<div class="t" style="left:247px;top:556px;color:#cad3f5">0 Byte/s</div>
<div class="t" style="left:387px;top:556px;color:#cad3f5">(0 bitps)</div>
<div class="t sup" style="left:529px;top:252px;color:#8aadf4">4</div>
<div class="t b" style="left:537px;top:257px;color:#cad3f5">proc</div>
<div class="t" style="left:597px;top:257px;color:#8aadf4">f</div>
<div class="t" style="left:607px;top:257px;color:#b8c0e0">ilter</div>
<div class="t" style="left:777px;top:257px;color:#8aadf4">r</div>
<div class="t" style="left:787px;top:257px;color:#b8c0e0">everse</div>
<div class="t" style="left:867px;top:257px;color:#b8c0e0">tre</div>
<div class="t" style="left:897px;top:257px;color:#8aadf4">e</div>
<div class="t arr" style="left:928.5px;top:259px;color:#8aadf4">←</div>
<div class="t b" style="left:947px;top:257px;color:#cad3f5">cpu lazy</div>
<div class="t arr" style="left:1038.5px;top:259px;color:#8aadf4">→</div>
<div class="t arr2" style="left:517px;top:602px;color:#8087a2">↑</div>
<div class="t b" style="left:537px;top:602px;color:#cad3f5">select</div>
<div class="t arr2" style="left:607px;top:602px;color:#8087a2">↓</div>
<div class="t b" style="left:637px;top:602px;color:#8087a2">info</div>
<div class="t b" style="left:717px;top:602px;color:#8087a2">kill</div>
<div class="t b" style="left:777px;top:602px;color:#8087a2">signals</div>
<div class="t b" style="left:1007px;top:602px;color:#cad3f5">0/421</div>
<div class="t b" style="left:547px;top:280px;color:#cad3f5">Pid:</div>
<div class="t b" style="left:597px;top:280px;color:#cad3f5">Program:</div>
<div class="t b" style="left:687px;top:280px;color:#cad3f5">Command:</div>
<div class="t b" style="left:827px;top:280px;color:#cad3f5">User:</div>
<div class="t b" style="left:897px;top:280px;color:#cad3f5">MemB</div>
<div class="t b" style="left:1007px;top:280px;color:#cad3f5">Cpu%</div>
<div class="t arr2" style="left:1057px;top:280px;color:#cad3f5">↑</div>
<div class="t arr2" style="left:1057px;top:579px;color:#cad3f5">↓</div>
<div class="t" style="left:547px;top:303px;color:#cad3f5">2141</div>
<div class="t" style="left:597px;top:303px;color:#7dc4e4">zen-bin</div>
<div class="t" style="left:687px;top:303px;color:#cad3f5">/opt/zen-brow</div>
<div class="t" style="left:827px;top:303px;color:#cad3f5">abhi+</div>
<div class="t" style="left:897px;top:303px;color:#7dc4e4">586M</div>
<div class="t" style="left:1017px;top:303px;color:#7dc4e4">0.1</div>
<div class="t" style="left:547px;top:326px;color:#c4cdef">1517</div>
<div class="t" style="left:597px;top:326px;color:#7ec0df">gnome-sh</div>
<div class="t" style="left:687px;top:326px;color:#c4cdef">/usr/bin/gnom</div>
<div class="t" style="left:827px;top:326px;color:#c4cdef">abhi+</div>
<div class="t" style="left:897px;top:326px;color:#7ec0df">278M</div>
<div class="t" style="left:1017px;top:326px;color:#7ec0df">0.1</div>
<div class="t" style="left:547px;top:349px;color:#bfc8e8">2736</div>
<div class="t" style="left:597px;top:349px;color:#7fbbda">Isolated</div>
<div class="t" style="left:687px;top:349px;color:#bfc8e8">/opt/zen-brow</div>
<div class="t" style="left:827px;top:349px;color:#bfc8e8">abhi+</div>
<div class="t" style="left:897px;top:349px;color:#7fbbda">394M</div>
<div class="t" style="left:1017px;top:349px;color:#7fbbda">0.0</div>
<div class="t" style="left:547px;top:372px;color:#b9c2e2">5196</div>
<div class="t" style="left:597px;top:372px;color:#80b6d5">gnome-te</div>
<div class="t" style="left:687px;top:372px;color:#b9c2e2">/usr/bin/gnom</div>
<div class="t" style="left:827px;top:372px;color:#b9c2e2">abhi+</div>
<div class="t" style="left:897px;top:372px;color:#80b6d5">107M</div>
<div class="t" style="left:1017px;top:372px;color:#80b6d5">0.0</div>
<div class="t" style="left:547px;top:395px;color:#b4bcdc">2996</div>
<div class="t" style="left:597px;top:395px;color:#80b2d0">Discord</div>
<div class="t" style="left:687px;top:395px;color:#b4bcdc">/proc/self/ex</div>
<div class="t" style="left:827px;top:395px;color:#b4bcdc">abhi+</div>
<div class="t" style="left:897px;top:395px;color:#80b2d0">389M</div>
<div class="t" style="left:1017px;top:395px;color:#80b2d0">0.3</div>
<div class="t" style="left:547px;top:418px;color:#aeb6d5">4603</div>
<div class="t" style="left:597px;top:418px;color:#81aecb">Isolated</div>
<div class="t" style="left:687px;top:418px;color:#aeb6d5">/opt/zen-brow</div>
<div class="t" style="left:827px;top:418px;color:#aeb6d5">abhi+</div>
<div class="t" style="left:897px;top:418px;color:#81aecb">287M</div>
<div class="t" style="left:1017px;top:418px;color:#81aecb">0.0</div>
<div class="t" style="left:547px;top:441px;color:#a8b0cf">2339</div>
<div class="t" style="left:597px;top:441px;color:#82a9c6">Isolated</div>
<div class="t" style="left:687px;top:441px;color:#a8b0cf">/opt/zen-brow</div>
<div class="t" style="left:827px;top:441px;color:#a8b0cf">abhi+</div>
<div class="t" style="left:897px;top:441px;color:#82a9c6">410M</div>
<div class="t" style="left:1017px;top:441px;color:#82a9c6">0.5</div>
<div class="t" style="left:547px;top:464px;color:#a3abc9">3452</div>
<div class="t" style="left:597px;top:464px;color:#83a4c2">Isolated</div>
<div class="t" style="left:687px;top:464px;color:#a3abc9">/opt/zen-brow</div>
<div class="t" style="left:827px;top:464px;color:#a3abc9">abhi+</div>
<div class="t" style="left:897px;top:464px;color:#83a4c2">284M</div>
<div class="t" style="left:1017px;top:464px;color:#83a4c2">0.0</div>
<div class="t" style="left:547px;top:487px;color:#9da5c2">2500</div>
<div class="t" style="left:597px;top:487px;color:#84a0bd">WebExten</div>
<div class="t" style="left:687px;top:487px;color:#9da5c2">/opt/zen-brow</div>
<div class="t" style="left:827px;top:487px;color:#9da5c2">abhi+</div>
<div class="t" style="left:897px;top:487px;color:#84a0bd">295M</div>
<div class="t" style="left:1017px;top:487px;color:#84a0bd">0.0</div>
<div class="t" style="left:547px;top:510px;color:#989fbc">4499</div>
<div class="t" style="left:597px;top:510px;color:#849cb8">nautilus</div>
<div class="t" style="left:687px;top:510px;color:#989fbc">/usr/bin/naut</div>
<div class="t" style="left:827px;top:510px;color:#989fbc">abhi+</div>
<div class="t" style="left:897px;top:510px;color:#849cb8">151M</div>
<div class="t" style="left:1017px;top:510px;color:#849cb8">0.0</div>
<div class="t" style="left:547px;top:533px;color:#929ab6">2349</div>
<div class="t" style="left:597px;top:533px;color:#8597b3">Isolated</div>
<div class="t" style="left:687px;top:533px;color:#929ab6">/opt/zen-brow</div>
<div class="t" style="left:827px;top:533px;color:#929ab6">abhi+</div>
<div class="t" style="left:897px;top:533px;color:#8597b3">410M</div>
<div class="t" style="left:1017px;top:533px;color:#8597b3">0.0</div>
<div class="t" style="left:547px;top:556px;color:#8d94af">4835</div>
<div class="t" style="left:597px;top:556px;color:#8692ae">Isolated</div>
<div class="t" style="left:687px;top:556px;color:#8d94af">/opt/zen-brow</div>
<div class="t" style="left:827px;top:556px;color:#8d94af">abhi+</div>
<div class="t" style="left:897px;top:556px;color:#8692ae">260M</div>
<div class="t" style="left:1017px;top:556px;color:#8692ae">0.0</div>
<div class="t" style="left:547px;top:579px;color:#878ea9">2343</div>
<div class="t" style="left:597px;top:579px;color:#878ea9">Isolated</div>
<div class="t" style="left:687px;top:579px;color:#878ea9">/opt/zen-brow</div>
<div class="t" style="left:827px;top:579px;color:#878ea9">abhi+</div>
<div class="t" style="left:897px;top:579px;color:#878ea9">281M</div>
<div class="t" style="left:1017px;top:579px;color:#878ea9">0.0</div>
</div>
</body></html>
